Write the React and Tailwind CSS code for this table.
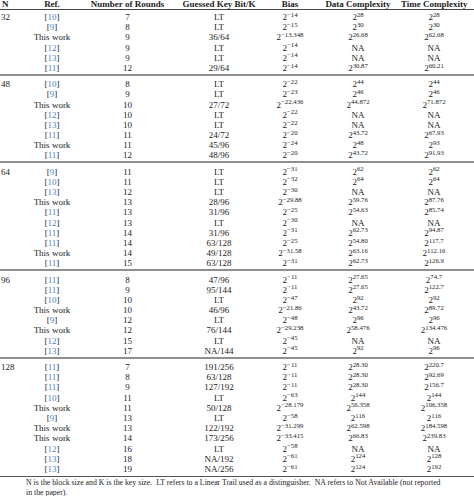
import React from "react";

const groups = [
  {
    n: "32",
    rows: [
      [10, "7", "LT", "-14", "28", "28"],
      [9, "8", "LT", "-15", "30", "30"],
      ["T", "9", "36/64", "-13.348", "26.68", "62.68"],
      [12, "9", "LT", "-14", "NA", "NA"],
      [13, "9", "LT", "-14", "NA", "NA"],
      [11, "12", "29/64", "-14", "30.87", "60.21"],
    ],
  },
  {
    n: "48",
    rows: [
      [10, "8", "LT", "-22", "44", "44"],
      [9, "9", "LT", "-23", "46", "46"],
      ["T", "10", "27/72", "-22.436", "44.872", "71.872"],
      [12, "10", "LT", "-22", "NA", "NA"],
      [13, "10", "LT", "-22", "NA", "NA"],
      [11, "11", "24/72", "-20", "43.72", "67.93"],
      ["T", "11", "45/96", "-24", "48", "93"],
      [11, "12", "48/96", "-20", "43.72", "91.93"],
    ],
  },
  {
    n: "64",
    rows: [
      [9, "11", "LT", "-31", "62", "62"],
      [10, "11", "LT", "-32", "64", "64"],
      [13, "12", "LT", "-30", "NA", "NA"],
      ["T", "13", "28/96", "-29.88", "59.76", "87.76"],
      [11, "13", "31/96", "-25", "54.63", "85.74"],
      [12, "13", "LT", "-30", "NA", "NA"],
      [11, "14", "31/96", "-31", "62.73", "94.87"],
      [11, "14", "63/128", "-25", "54.80", "117.7"],
      ["T", "14", "49/128", "-31.58", "63.16", "112.16"],
      [11, "15", "63/128", "-31", "62.73", "126.9"],
    ],
  },
  {
    n: "96",
    rows: [
      [11, "8", "47/96", "-11", "27.65", "74.7"],
      [11, "9", "95/144", "-11", "27.65", "122.7"],
      [10, "10", "LT", "-47", "92", "92"],
      ["T", "10", "46/96", "-21.86", "43.72", "89.72"],
      [9, "12", "LT", "-48", "96", "96"],
      ["T", "12", "76/144", "-29.238", "58.476", "134.476"],
      [12, "15", "LT", "-45", "NA", "NA"],
      [13, "17", "NA/144", "-45", "92", "96"],
    ],
  },
  {
    n: "128",
    rows: [
      [11, "7", "191/256", "-11", "28.30", "220.7"],
      [11, "8", "63/128", "-11", "28.30", "92.69"],
      [11, "9", "127/192", "-11", "28.30", "156.7"],
      [10, "11", "LT", "-63", "144", "144"],
      ["T", "11", "50/128", "-28.179", "56.358", "106.358"],
      [9, "13", "LT", "-58", "116", "116"],
      ["T", "13", "122/192", "-31.299", "62.598", "184.598"],
      ["T", "14", "173/256", "-33.415", "66.83", "239.83"],
      [12, "16", "LT", "-58", "NA", "NA"],
      [13, "18", "NA/192", "-61", "124", "128"],
      [13, "19", "NA/256", "-61", "124", "192"],
    ],
  },
];

const cols = "grid grid-cols-[22px_60px_91px_92px_50px_86px_66px]";

function Pow({ e }) {
  if (e === "NA") return <span>NA</span>;
  return (
    <span>
      2<sup>{e.replace("-", "\u2212")}</sup>
    </span>
  );
}

function Ref({ r }) {
  if (r === "T") return <span>This work</span>;
  return (
    <span>
      [<span className="text-[#3f86cf]">{r}</span>]
    </span>
  );
}

export default function App() {
  return (
    <div
      className="w-[474px] h-[496px] overflow-hidden bg-white text-[#1c1c1c] text-[9px]"
      style={{ fontFamily: '"Liberation Serif", "Times New Roman", serif' }}
    >
      <div className="-mt-[1.5px]">
        <div className={`${cols} leading-[10px] font-bold pb-[0.5px] border-b border-[#444] whitespace-nowrap`}>
          <div className="pl-[2px]">N</div>
          <div className="text-center">Ref.</div>
          <div className="text-center">Number of Rounds</div>
          <div className="text-center">Guessed Key Bit/K</div>
          <div className="text-center">Bias</div>
          <div className="text-center">Data Complexity</div>
          <div className="text-center">Time Complexity</div>
        </div>
        <div className="pt-[2px]">
          {groups.map((g, gi) => (
            <div key={g.n}>
              {gi > 0 && <div className="mt-[0.5px] mb-[3.5px] h-[2px] bg-[#8f8f8f]" />}
              {g.rows.map((r, ri) => (
                <div key={ri} className={`${cols} leading-[10.2px] h-[10.2px] whitespace-nowrap`}>
                  <div className="pl-[1px]">{ri === 0 ? g.n : ""}</div>
                  <div className="text-center">
                    <Ref r={r[0]} />
                  </div>
                  <div className="text-center">{r[1]}</div>
                  <div className="text-center">{r[2]}</div>
                  <div className="text-center">
                    <Pow e={r[3]} />
                  </div>
                  <div className="text-center">
                    <Pow e={r[4]} />
                  </div>
                  <div className="text-center">
                    <Pow e={r[5]} />
                  </div>
                </div>
              ))}
            </div>
          ))}
        </div>
        <div className="mt-[1.5px] h-[1.5px] bg-[#555]" />
        <div className="pl-[26px] leading-[10px] pt-[1px] text-[7.8px] whitespace-pre">
          <div>N is the block size and K is the key size.  LT refers to a Linear Trail used as a distinguisher.  NA refers to Not Available (not reported</div>
          <div>in the paper).</div>
        </div>
      </div>
    </div>
  );
}
